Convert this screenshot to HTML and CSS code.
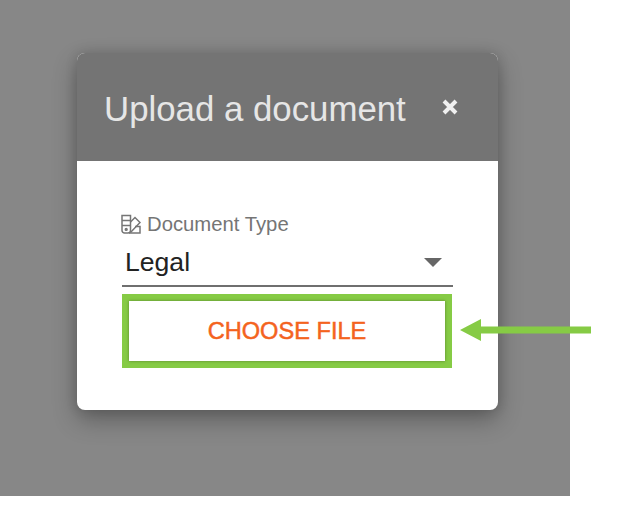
FILE: index.html
```html
<!DOCTYPE html>
<html lang="en">
<head>
  <meta charset="UTF-8" />
  <title>Upload a document</title>
  <link rel="stylesheet" href="styles.css">
</head>
<body>

  <div class="backdrop">
    <div class="modal">
      <div class="modal-header">
        <h2 class="modal-title">Upload a document</h2>
        <svg class="close-icon" viewBox="0 0 18 18" width="18" height="18">
          <path d="M3 3 L15 15 M15 3 L3 15" />
        </svg>
      </div>
      <div class="modal-body">
        <label class="field-label">
          <svg class="type-icon" viewBox="0 0 20 20" width="20" height="20">
            <path d="M1 1.5 h8.5 v15 a2.5 2.5 0 0 1 -2.5 2.5 h-3.5 a2.5 2.5 0 0 1 -2.5 -2.5 z M1 6.5 h8.5 M1 11.5 h8.5" />
            <path d="M9.5 8 l4.5 -4.5 l5 5 l-9.5 10" />
            <path d="M8 19 h11 v-6.5 h-5" />
            <circle cx="5.2" cy="15.4" r="0.9" />
          </svg>
          Document Type
        </label>
        <div class="select-box">
          <span>Legal</span>
          <span class="caret"></span>
        </div>
        <div class="highlight">
          <button class="btn-choose">CHOOSE FILE</button>
        </div>
      </div>
    </div>
  </div>

  <svg class="arrow" viewBox="0 0 131 22" width="131" height="22">
    <path d="M0 11 L21 0 V7.5 H131 V14.5 H21 V22 Z" />
  </svg>

</body>
</html>
```

FILE: styles.css
```css
body {
  font-family: 'Liberation Sans', Arial, sans-serif;
  background-color: white;
  margin: 0;
}

.backdrop {
  width: 570px;
  height: 496px;
  padding: 53px 0 0 77px;
  box-sizing: border-box;
  background-color: #878787;
}

.modal {
  width: 421px;
  height: 357px;
  background: white;
  border-radius: 8px;
  overflow: hidden;
  box-shadow: 0 10px 24px rgba(0, 0, 0, 0.3), 0 0 12px rgba(0, 0, 0, 0.15);
}

.modal-header {
  height: 108px;
  background-color: #747474;
  display: flex;
  align-items: center;
  justify-content: space-between;
  padding: 0 39px 0 28px;
}

.modal-title {
  margin: 3px 0 0 -1px;
  font-size: 34.8px;
  font-weight: normal;
  color: #e6e6e6;
}

.close-icon {
  fill: none;
  stroke: #f0f0f0;
  stroke-width: 4;
}

.modal-body {
  padding: 51px 45px 0;
}

.field-label {
  display: flex;
  align-items: center;
  gap: 6px;
  font-size: 20.3px;
  color: #757575;
  height: 24px;
  margin-left: -1px;
}

.type-icon {
  fill: none;
  stroke: #757575;
  stroke-width: 1.5;
  flex-shrink: 0;
}

.select-box {
  display: flex;
  align-items: center;
  justify-content: space-between;
  height: 45px;
  padding: 4px 11px 0 3px;
  font-size: 26.6px;
  color: #222;
  border-bottom: 2px solid #6f6f6f;
}

.caret {
  width: 0;
  height: 0;
  border-left: 9px solid transparent;
  border-right: 9px solid transparent;
  border-top: 9px solid #666;
}

.highlight {
  margin: 7px 1px 0 0;
  border: 7px solid #86cb45;
  height: 60px;
}

.btn-choose {
  width: 100%;
  height: 100%;
  background: white;
  border: none;
  box-shadow: 0 0 3px rgba(0, 0, 0, 0.35);
  font-family: inherit;
  font-size: 23.6px;
  color: #f4631e;
  -webkit-text-stroke: 0.5px #f4631e;
}

.arrow {
  position: absolute;
  left: 460px;
  top: 319px;
  fill: #86cb45;
}
```
